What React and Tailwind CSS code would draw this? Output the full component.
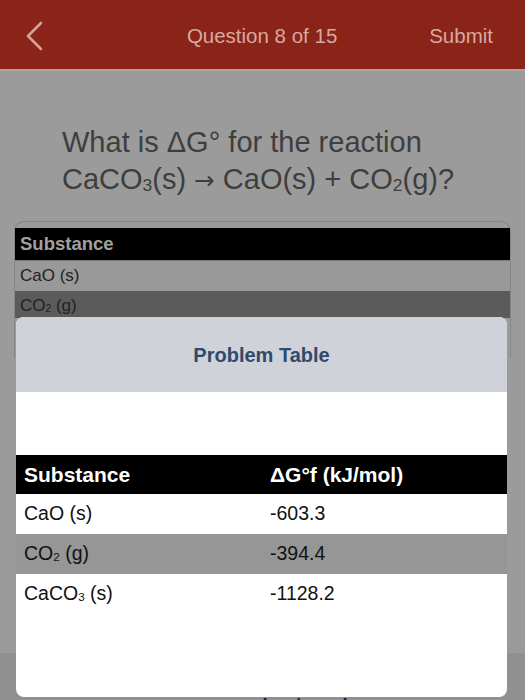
import React from 'react'

const font = { fontFamily: '"Liberation Sans", Arial, sans-serif' }

function Sub({ children }) {
  return <span className="text-[0.6em] align-[-0.1em]">{children}</span>
}

function Arrow() {
  return <span style={{ fontFamily: '"DejaVu Sans", sans-serif' }} className="text-[0.85em]">→</span>
}

const ROWS = [
  { name: <>CaO (s)</>, value: '-603.3', bg: 'bg-white' },
  { name: <>CO<Sub>2</Sub> (g)</>, value: '-394.4', bg: 'bg-[#969696]' },
  { name: <>CaCO<Sub>3</Sub> (s)</>, value: '-1128.2', bg: 'bg-white' },
]

function Header() {
  return (
    <div className="h-[71px] shrink-0 bg-[#8a2318] flex items-center pl-[25px] pr-[32px] pt-[3px] border-b-2 border-[#a8a2a0]">
      <svg width="20" height="30" viewBox="0 0 20 30" className="shrink-0">
        <path d="M16 2 L3 15 L16 28" fill="none" stroke="#d6a29b" strokeWidth="2.6" strokeLinecap="round" strokeLinejoin="round" />
      </svg>
      <div className="flex-1 text-center text-[20.5px] text-[#d8a8a1] pl-[50px]">Question 8 of 15</div>
      <div className="text-[20.5px] text-[#d8a8a1]">Submit</div>
    </div>
  )
}

function BehindTable() {
  return (
    <div className="mx-[14px] mt-[17px] h-[137px] shrink-0 rounded-t-[10px] border border-[#858585] border-b-0 pt-[6px]">
      <div className="h-[32px] bg-black flex items-center px-[5px] text-[18.5px] font-bold text-[#a0a0a0]">Substance</div>
      <div className="h-[31px] bg-[#999999] flex items-center px-[5px] text-[17px] text-[#222] border-t border-[#7a7a7a]">CaO (s)</div>
      <div className="h-[27px] bg-[#5b5b5b] pt-[2px] px-[5px] text-[17px] text-[#222]">
        <span>CO<Sub>2</Sub> (g)</span>
      </div>
    </div>
  )
}

function Modal() {
  return (
    <div className="absolute left-[16px] top-[317px] w-[491px] h-[380px] bg-white rounded-[8px] overflow-hidden">
      <div className="h-[75px] bg-[#d0d2da] flex items-center justify-center text-[20px] font-bold text-[#2f4a6a]">
        Problem Table
      </div>
      <div className="h-[63px]" />
      <div className="h-[39px] bg-black flex items-center text-[21px] font-bold text-white">
        <div className="w-[254px] pl-[8px]">Substance</div>
        <div>ΔG°f (kJ/mol)</div>
      </div>
      {ROWS.map((r, i) => (
        <div key={i} className={`h-[40px] flex items-center text-[19.5px] text-[#111] ${r.bg}`}>
          <div className="w-[254px] pl-[8px]">{r.name}</div>
          <div>{r.value}</div>
        </div>
      ))}
    </div>
  )
}

export default function App() {
  return (
    <div className="relative w-[525px] h-[700px] overflow-hidden bg-[#9b9b9b] flex flex-col" style={font}>
      <Header />
      <div className="pl-[62px] pt-[53px] text-[29px] leading-[37px] text-[#3e3e3e]">
        <div>What is ΔG° for the reaction</div>
        <div>CaCO<Sub>3</Sub>(s) <Arrow /> CaO(s) + CO<Sub>2</Sub>(g)?</div>
      </div>
      <BehindTable />
      <div className="mt-auto h-[47px] bg-[#909090] pl-[160px] pt-[42px] text-[30px] text-[#222] leading-none">
        -603.3 &nbsp;kJ/mol
      </div>
      <Modal />
    </div>
  )
}
